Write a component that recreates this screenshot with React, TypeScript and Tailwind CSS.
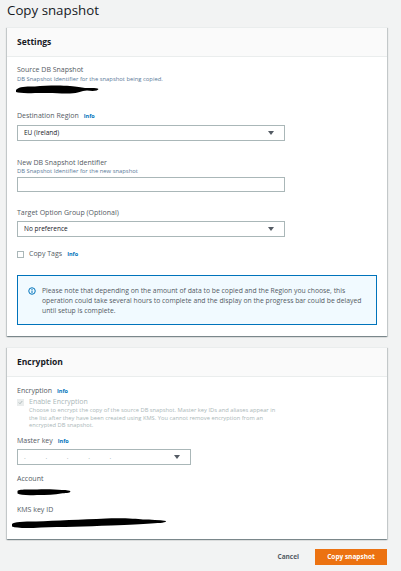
import React from 'react';

const font = "font-['Open_Sans','Noto_Sans',sans-serif]";

function Info() {
  return <span className="ml-[5px] text-[5.5px] font-bold text-[#0073bb]">Info</span>;
}

function Arrow() {
  return (
    <svg width="6" height="5" viewBox="0 0 6 5" className="absolute right-[10px] top-1/2 -translate-y-1/2">
      <path d="M0 0.5 H6 L3 4.5 Z" fill="#545b64" />
    </svg>
  );
}

function Select({ value, width, className = '' }: { value: React.ReactNode; width: string; className?: string }) {
  return (
    <div className={`relative flex h-[16px] items-center border border-[#aab7b8] bg-white pl-[6px] text-[6.5px] text-[#16191f] ${width} ${className}`}>
      {value}
      <Arrow />
    </div>
  );
}

function Scribble({ d, w, h, className = '' }: { d: string; w: number; h: number; className?: string }) {
  return (
    <svg width={w} height={h} viewBox={`0 0 ${w} ${h}`} className={`block ${className}`}>
      <path d={d} fill="#000" />
    </svg>
  );
}

function Card({ title, children, className = '' }: { title: string; children: React.ReactNode; className?: string }) {
  return (
    <div className={`border-t border-[#eaeded] bg-white shadow-[0_1px_1px_0_rgba(0,28,36,0.3),1px_1px_1px_0_rgba(0,28,36,0.15),-1px_1px_1px_0_rgba(0,28,36,0.15)] ${className}`}>
      <div className="flex h-[29px] items-center border-b border-[#eaeded] bg-[#fafafa] px-[10px] text-[8.5px] font-bold text-[#16191f]">
        {title}
      </div>
      <div className="px-[10px]">{children}</div>
    </div>
  );
}

export default function App() {
  return (
    <div className={`min-h-[571px] w-[401px] bg-[#f2f3f3] pl-[7px] pr-[14px] ${font}`}>
      <h1 className="h-[27px] pt-0 text-[13.3px] leading-[20px] text-[#16191f]">Copy snapshot</h1>

      <Card title="Settings" className="pb-[11px]">
        <div className="pt-[8px] text-[7px] leading-[10px] text-[#545b64]">Source DB Snapshot</div>
        <div className="text-[5.85px] leading-[8px] text-[#5b7a99]">DB Snapshot Identifier for the snapshot being copied.</div>
        <Scribble
          w={84}
          h={10}
          className="-ml-[2px] mt-[1px]"
          d="M1 6 C3 3 10 2 20 2.5 C30 1.5 45 1 55 2 C62 3 66 3 70 4 C76 4 82 3.5 83.5 5 C83 7 78 7.5 72 6.5 C66 7 64 9 55 9.5 C45 9.5 30 9 20 9 C10 9.5 4 9 1 8 Z"
        />

        <div className="mt-[17px] flex items-center text-[7px] leading-[10px] text-[#545b64]">
          Destination Region <Info />
        </div>
        <Select value="EU (Ireland)" width="w-[268px]" className="mt-[4px]" />

        <div className="mt-[17px] text-[7px] leading-[10px] text-[#545b64]">New DB Snapshot Identifier</div>
        <div className="text-[5.85px] leading-[7px] text-[#5b7a99]">DB Snapshot Identifier for the new snapshot</div>
        <div className="mt-[2px] h-[15px] w-[268px] border border-[#aab7b8] bg-white" />

        <div className="mt-[16px] text-[7px] leading-[10px] text-[#545b64]">Target Option Group (Optional)</div>
        <Select value="No preference" width="w-[268px]" className="mt-[3px]" />

        <div className="mt-[12px] flex h-[10px] items-center text-[7px] text-[#545b64]">
          <span className="mr-[5px] h-[7px] w-[7px] border border-[#aab7b8] bg-white" />
          Copy Tags <Info />
        </div>

        <div className="mt-[16px] flex h-[50px] border border-[#0073bb] bg-[#f1faff] pl-[10px] pt-[10px]">
          <svg width="8" height="8" viewBox="0 0 16 16" className="mt-[1px] shrink-0">
            <circle cx="8" cy="8" r="6.5" fill="none" stroke="#0073bb" strokeWidth="2" />
            <rect x="7" y="7" width="2" height="5" fill="#0073bb" />
            <rect x="7" y="4" width="2" height="2" fill="#0073bb" />
          </svg>
          <p className="ml-[6px] text-[6.8px] leading-[10px] text-[#545b64]">
            Please note that depending on the amount of data to be copied and the Region you choose, this
            <br />
            operation could take several hours to complete and the display on the progress bar could be delayed
            <br />
            until setup is complete.
          </p>
        </div>
      </Card>

      <Card title="Encryption" className="mt-[11px] pb-[10px]">
        <div className="flex items-center pt-[9px] text-[7px] leading-[10px] text-[#545b64]">
          Encryption <Info />
        </div>
        <div className="mt-[1px] flex h-[10px] items-center text-[7px] text-[#aab7b8]">
          <span className="mr-[5px] flex h-[7px] w-[7px] items-center justify-center bg-[#eaeded]">
            <svg width="5" height="5" viewBox="0 0 10 10">
              <path d="M1.5 5 L4 7.5 L8.5 2" fill="none" stroke="#aab7b8" strokeWidth="1.8" />
            </svg>
          </span>
          Enable Encryption
        </div>
        <p className="pl-[12px] text-[5.75px] leading-[7.5px] text-[#aab7b8]">
          Choose to encrypt the copy of the source DB snapshot. Master key IDs and aliases appear in
          <br />
          the list after they have been created using KMS. You cannot remove encryption from an
          <br />
          encrypted DB snapshot.
        </p>

        <div className="mt-[6px] flex items-center text-[7px] leading-[10px] text-[#545b64]">
          Master key <Info />
        </div>
        <Select
          value={<span className="tracking-[9px] text-[#aab7b8]">.&nbsp;.&nbsp;.&nbsp;.&nbsp;.</span>}
          width="w-[174px]"
          className="mt-[3px]"
        />

        <div className="mt-[9px] text-[7px] leading-[10px] text-[#545b64]">Account</div>
        <Scribble
          w={54}
          h={8}
          className="mt-[4px]"
          d="M0.5 3 C2 1 10 1.5 20 1.5 C30 1 38 1.5 45 2 C50 2 53 2.5 53.5 3.5 C53 5 48 5 44 5.5 C38 6.5 30 7 20 7 C10 7.5 3 7 0.5 5.5 Z"
        />

        <div className="mt-[9px] text-[7px] leading-[10px] text-[#545b64]">KMS key ID</div>
        <Scribble
          w={156}
          h={12}
          className="-ml-[6px] mt-[2px]"
          d="M1 7 C3 5 12 4.5 25 4.5 C45 3.5 70 2.5 95 1.5 C115 1 125 2 132 2.5 C140 2.5 148 3 155 4 C155.5 5.5 150 6 140 6.5 C130 7 120 8 100 8.5 C75 9.5 50 10 30 10.5 C15 11.5 5 11 1 9.5 Z"
        />
      </Card>

      <div className="mt-[10px] flex items-center justify-end">
        <span className="mr-[16px] text-[6.5px] font-bold text-[#545b64]">Cancel</span>
        <button className="flex h-[16px] w-[72px] items-center justify-center bg-[#ec7211] text-[6.5px] font-bold text-white">
          Copy snapshot
        </button>
      </div>
    </div>
  );
}
